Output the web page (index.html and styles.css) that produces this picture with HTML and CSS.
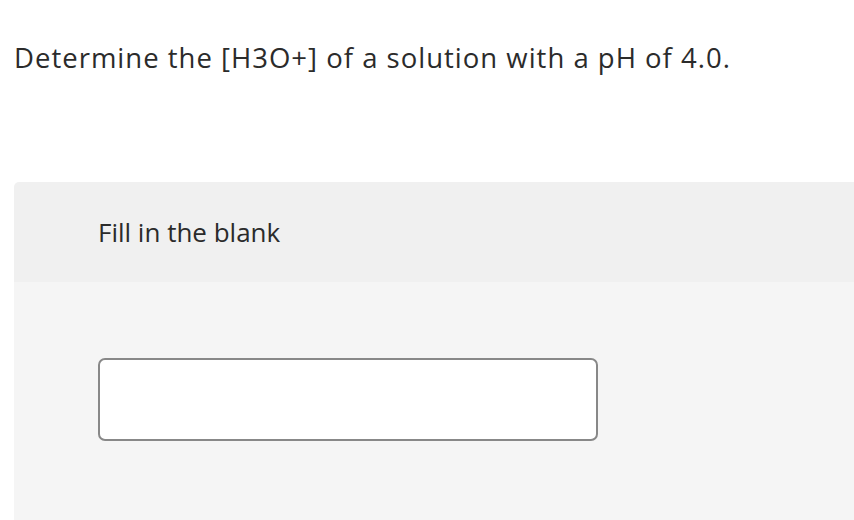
FILE: index.html
```html
<!DOCTYPE html>
<html>
<head>
<meta charset="utf-8">
<link rel="stylesheet" href="styles.css">
</head>
<body>
<div class="page">
  <p class="question">Determine the [H3O+] of a solution with a pH of 4.0.</p>
  <div class="panel">
    <div class="panel-head">Fill in the blank</div>
    <div class="panel-body">
      <div class="blank"></div>
    </div>
  </div>
</div>
</body>
</html>
```
FILE: styles.css
```css
html, body {
  margin: 0;
  padding: 0;
  background: #fff;
}
body {
  font-family: "Open Sans", Lato, sans-serif;
  color: #2b2b2b;
  overflow: hidden;
}
.page {
  padding-left: 14px;
  width: 854px;
  box-sizing: border-box;
}
.question {
  margin: 0;
  padding-top: 38px;
  font-size: 27.5px;
  letter-spacing: 1px;
  line-height: 40px;
}
.panel {
  margin-top: 104px;
  border-top-left-radius: 5px;
  overflow: hidden;
  width: 860px;
}
.panel-head {
  background: #f0f0f0;
  height: 100px;
  box-sizing: border-box;
  padding: 30px 0 0 84px;
  font-size: 26px;
  line-height: 40px;
}
.panel-body {
  background: #f5f5f5;
  height: 240px;
  padding: 76px 0 0 84px;
  box-sizing: border-box;
}
.blank {
  width: 500px;
  height: 83px;
  box-sizing: border-box;
  border: 2px solid #888;
  border-radius: 7px;
  background: #fff;
}
```
